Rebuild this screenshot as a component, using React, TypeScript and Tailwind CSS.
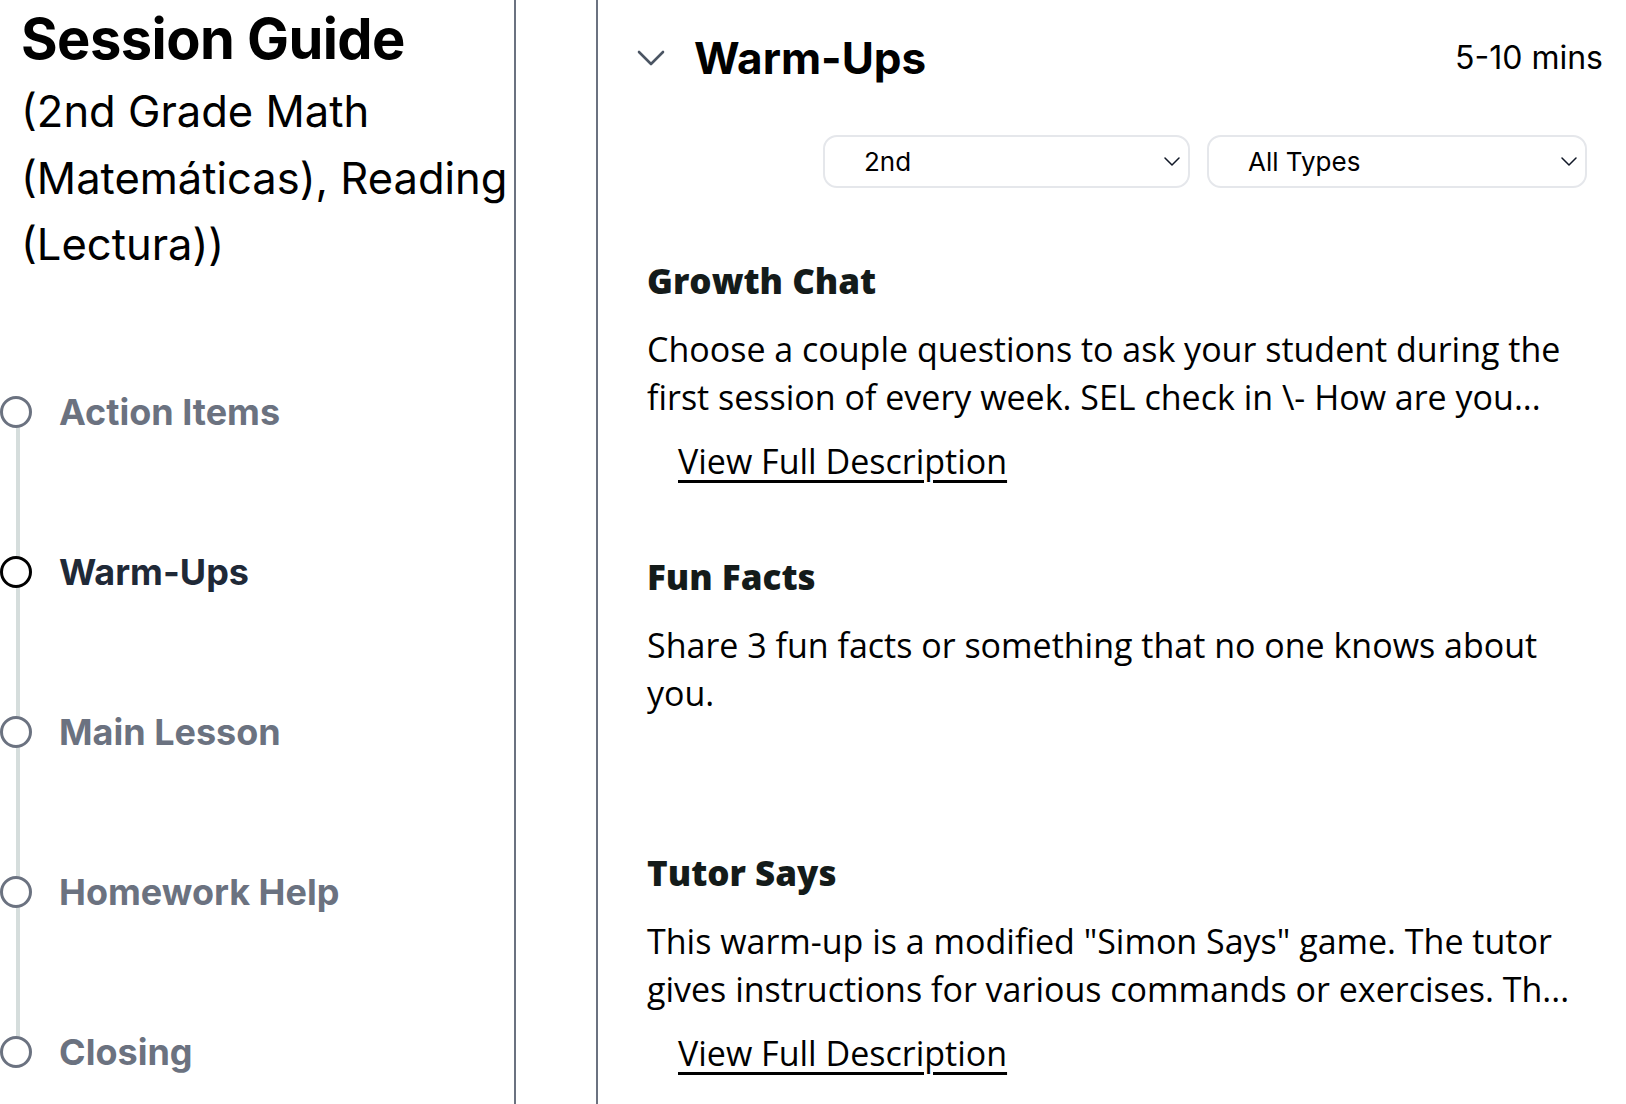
import React from 'react';

interface NavStep {
  label: string;
  active?: boolean;
}

interface WarmUp {
  title: string;
  summary: string;
  hasFull: boolean;
}

const steps: NavStep[] = [
  { label: 'Action Items' },
  { label: 'Warm-Ups', active: true },
  { label: 'Main Lesson' },
  { label: 'Homework Help' },
  { label: 'Closing' },
];

const warmUps: WarmUp[] = [
  {
    title: 'Growth Chat',
    summary:
      'Choose a couple questions to ask your student during the first session of every week. SEL check in \\- How are you...',
    hasFull: true,
  },
  {
    title: 'Fun Facts',
    summary: 'Share 3 fun facts or something that no one knows about you.',
    hasFull: false,
  },
  {
    title: 'Tutor Says',
    summary:
      'This warm-up is a modified "Simon Says" game. The tutor gives instructions for various commands or exercises. Th...',
    hasFull: true,
  },
];

function SelectChevron() {
  return (
    <svg width="16" height="9" viewBox="0 0 16 9" fill="none" className="shrink-0">
      <path d="M1 1l7 7 7-7" stroke="#111827" strokeWidth="1.5" strokeLinecap="round" strokeLinejoin="round" />
    </svg>
  );
}

function FakeSelect({ value, width }: { value: string; width: string }) {
  return (
    <button
      type="button"
      className={`${width} h-[53px] flex items-center justify-between pl-[39px] pr-2 rounded-[14px] border-2 border-[#e5e7eb] bg-white text-[26px] text-black font-['Inter',sans-serif]`}
    >
      <span>{value}</span>
      <SelectChevron />
    </button>
  );
}

export default function SessionGuide() {
  return (
    <div className="min-h-screen h-[1104px] flex bg-white overflow-hidden">
      {/* Sidebar */}
      <aside className="w-[516px] shrink-0 border-r-2 border-[#6b7280] font-['Inter',sans-serif]">
        <div className="pl-[21px] pt-[6px]">
          <h1 className="text-[56px] leading-[66px] font-bold text-black tracking-[-0.01em]">Session Guide</h1>
          <p className="mt-[6px] text-[43.5px] leading-[66.5px] text-black">
            (2nd Grade Math (Matemáticas), Reading (Lectura))
          </p>
        </div>

        <nav className="mt-[118px] flex flex-col">
          {steps.map((step, i) => {
            const last = i === steps.length - 1;
            return (
              <div key={step.label} className={`flex ${last ? 'h-8' : 'h-[160px]'}`}>
                <div className="w-8 flex flex-col shrink-0">
                  <div
                    className={`h-8 w-8 rounded-full border-[3px] shrink-0 ${
                      step.active ? 'border-black' : 'border-[#6b7280]'
                    }`}
                  />
                  {!last && <div className="ml-4 w-1 flex-1 bg-[#d5dddc]" />}
                </div>
                <div
                  className={`ml-[27px] h-8 flex items-center text-[36px] font-bold ${
                    step.active ? 'text-[#1f2937]' : 'text-[#6b7280]'
                  }`}
                >
                  {step.label}
                </div>
              </div>
            );
          })}
        </nav>
      </aside>

      {/* Main panel */}
      <main className="ml-[80px] flex-1 border-l-2 border-[#6b7280] pt-[30px]">
        <div className="h-14 flex items-center justify-between pl-[39px] pr-[23px] font-['Inter',sans-serif]">
          <div className="flex items-center">
            <svg width="28" height="16" viewBox="0 0 28 16" fill="none">
              <path d="M2 2l12 12 12-12" stroke="#4b5563" strokeWidth="2.6" strokeLinecap="round" strokeLinejoin="round" />
            </svg>
            <h2 className="ml-[29px] text-[44px] font-bold text-black">Warm-Ups</h2>
          </div>
          <span className="text-[32px] text-black">5-10 mins</span>
        </div>

        <div className="mt-[49px] flex justify-end gap-[17px] pr-[39px]">
          <FakeSelect value="2nd" width="w-[367px]" />
          <FakeSelect value="All Types" width="w-[380px]" />
        </div>

        <div className="mt-[73px] pl-[49px] pr-[26px] font-['Open_Sans',sans-serif]">
          {warmUps.map((w) => (
            <section key={w.title} className="pb-[76px]">
              <h3 className="text-[35px] leading-[40px] font-extrabold text-[#141b1a]">{w.title}</h3>
              <p className="mt-6 text-[34px] leading-[48px] text-black">{w.summary}</p>
              <div className="mt-5 h-10">
                {w.hasFull && (
                  <button
                    type="button"
                    className="ml-[31px] text-[34px] leading-[40px] font-medium text-black underline decoration-[3px] underline-offset-[6px]"
                  >
                    View Full Description
                  </button>
                )}
              </div>
            </section>
          ))}
        </div>
      </main>
    </div>
  );
}
